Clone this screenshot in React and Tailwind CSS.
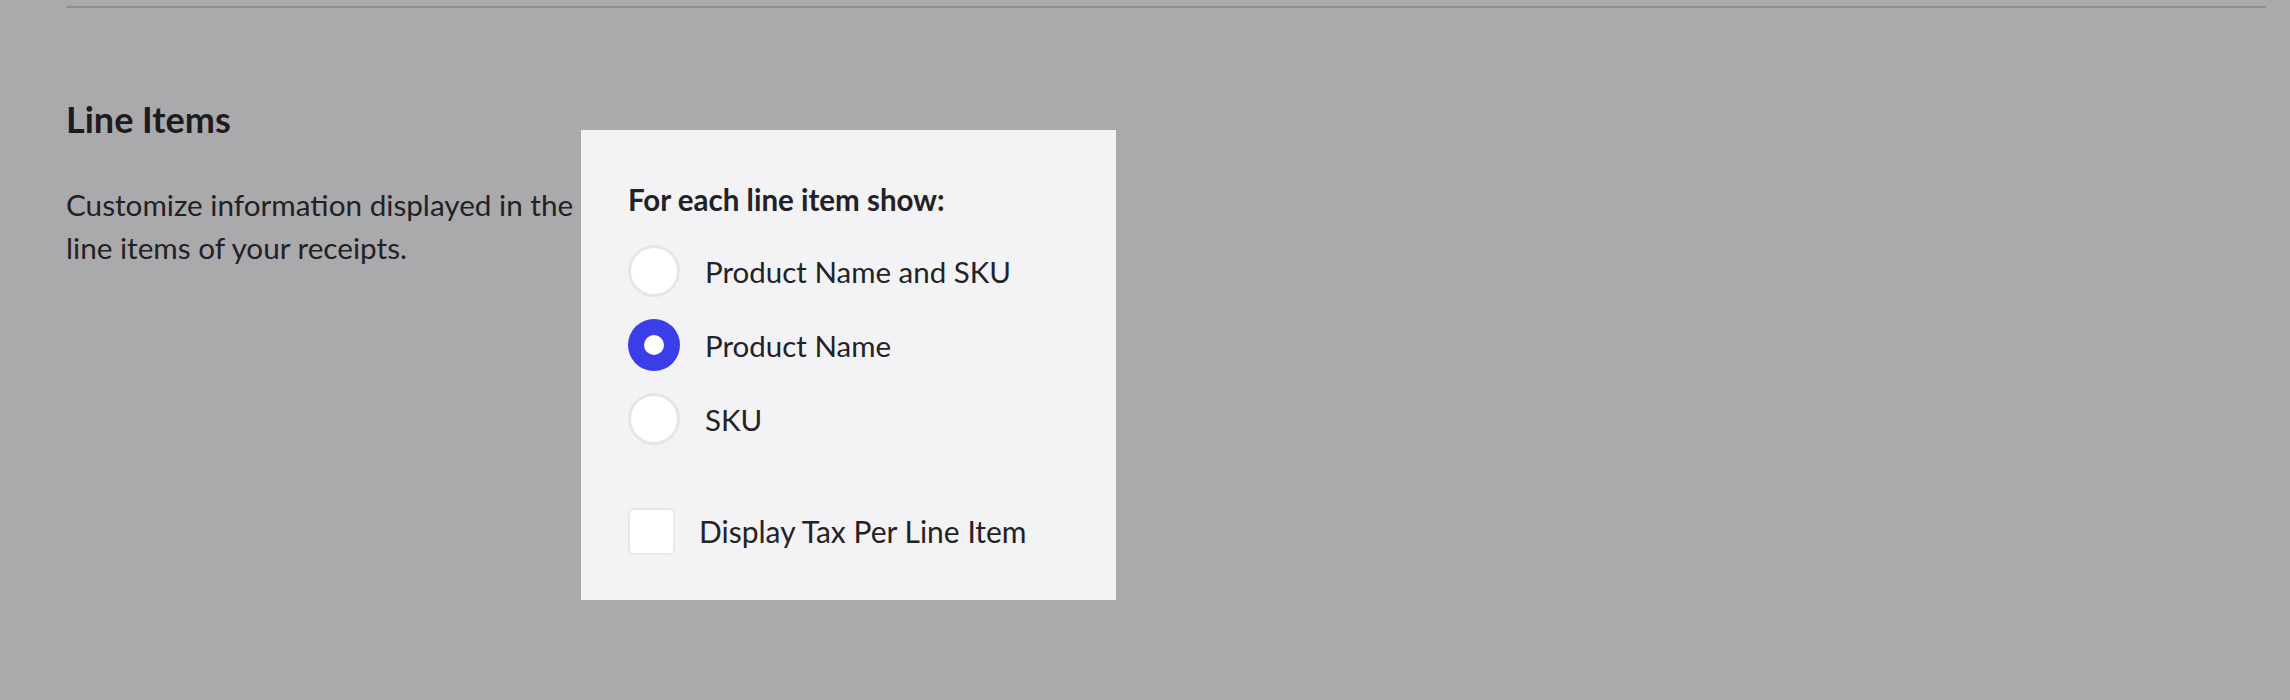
import { useState } from 'react';

const options = ['Product Name and SKU', 'Product Name', 'SKU'];

const Radio = ({ checked, label, onClick }) => (
  <button type="button" onClick={onClick} className="flex items-center h-[52px] text-left">
    {checked ? (
      <span className="w-[52px] h-[52px] rounded-full bg-[#3a3de8] flex items-center justify-center shrink-0">
        <span className="w-[20px] h-[20px] rounded-full bg-white" />
      </span>
    ) : (
      <span className="w-[52px] h-[52px] rounded-full bg-white border-[3px] border-[#e6e5e9] shrink-0" />
    )}
    <span className="ml-[25px] text-[29.5px] leading-[43px] text-[#232226]">{label}</span>
  </button>
);

export default function App() {
  const [show, setShow] = useState('Product Name');
  const [taxPerLine, setTaxPerLine] = useState(false);

  return (
    <div className="min-h-[700px] bg-[#aaa9ac] pt-[6px] pl-[66px] pr-[24px] font-['Lato',_'Noto_Sans',_sans-serif]">
      <div className="h-[2px] bg-[#8e8d91]" />

      <div className="flex items-start">
        <div className="w-[515px] shrink-0">
          <h2 className="mt-[90px] text-[36px] leading-[1.2] font-bold text-[#1c1b1f]">Line Items</h2>
          <p className="mt-[42px] text-[29.7px] leading-[43px] text-[#222125]">
            Customize information displayed in the line items of your receipts.
          </p>
        </div>

        <div className="mt-[122px] w-[535px] bg-[#f3f2f5] pl-[47px] pt-[48px] pb-[45px]">
          <h3 className="text-[29.5px] leading-[43px] font-bold text-[#222126]">For each line item show:</h3>
          <div className="mt-[24px] flex flex-col gap-[22px]">
            {options.map((o) => (
              <Radio key={o} label={o} checked={show === o} onClick={() => setShow(o)} />
            ))}
          </div>

          <button
            type="button"
            onClick={() => setTaxPerLine(!taxPerLine)}
            className="mt-[63px] flex items-center h-[47px] text-left"
          >
            <span className="w-[47px] h-[47px] rounded-[6px] bg-white border-2 border-[#e8e7ea] shrink-0 flex items-center justify-center">
              {taxPerLine && <span className="w-[22px] h-[22px] rounded-[3px] bg-[#3a3de8]" />}
            </span>
            <span className="ml-[24px] text-[30px] leading-[47px] text-[#232226]">Display Tax Per Line Item</span>
          </button>
        </div>
      </div>
    </div>
  );
}
